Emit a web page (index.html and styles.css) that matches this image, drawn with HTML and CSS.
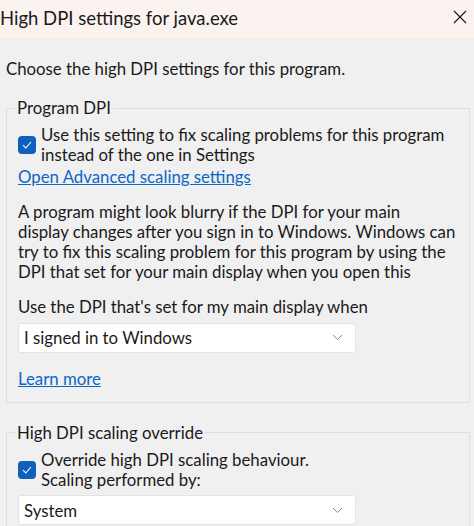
FILE: index.html
```html
<!DOCTYPE html>
<html lang="en">

<head>
    <meta charset="UTF-8">
    <meta name="viewport" content="width=device-width, initial-scale=1.0">
    <title>High DPI settings for java.exe</title>
    <link rel="stylesheet" href="styles.css">
</head>

<body>
    <div class="titlebar">
        <span class="title">High DPI settings for java.exe</span>
        <svg class="close" width="14" height="14" viewBox="0 0 14 14">
            <path d="M1 1 L13 13 M13 1 L1 13" stroke="#1a1a1a" stroke-width="1.2" fill="none" />
        </svg>
    </div>

    <div class="content">
        <p class="intro">Choose the high DPI settings for this program.</p>

        <fieldset class="group">
            <legend>Program DPI</legend>
            <label class="check">
                <span class="box">
                    <svg width="10" height="8" viewBox="0 0 10 8">
                        <path d="M1 4.2 L3.8 7 L9 1" stroke="#fff" stroke-width="1.1" fill="none" />
                    </svg>
                </span>
                <span>Use this setting to fix scaling problems for this program instead of the one in Settings</span>
            </label>
            <a href="#" class="link">Open Advanced scaling settings</a>

            <p class="desc">A program might look blurry if the DPI for your main<br>
                display changes after you sign in to Windows. Windows can<br>
                try to fix this scaling problem for this program by using the<br>
                DPI that set for your main display when you open this</p>

            <p class="label">Use the DPI that's set for my main display when</p>
            <div class="select">
                <span>I signed in to Windows</span>
                <svg width="11" height="7" viewBox="0 0 11 7">
                    <path d="M1 1 L5.5 5.5 L10 1" stroke="#888" stroke-width="1" fill="none" />
                </svg>
            </div>

            <a href="#" class="link learn">Learn more</a>
        </fieldset>

        <fieldset class="group last">
            <legend>High DPI scaling override</legend>
            <label class="check">
                <span class="box">
                    <svg width="10" height="8" viewBox="0 0 10 8">
                        <path d="M1 4.2 L3.8 7 L9 1" stroke="#fff" stroke-width="1.1" fill="none" />
                    </svg>
                </span>
                <span class="lines">
                    <span>Override high DPI scaling behaviour.</span>
                    <span>Scaling performed by:</span>
                </span>
            </label>
            <div class="select override">
                <span>System</span>
                <svg width="11" height="7" viewBox="0 0 11 7">
                    <path d="M1 1 L5.5 5.5 L10 1" stroke="#888" stroke-width="1" fill="none" />
                </svg>
            </div>
        </fieldset>
    </div>
</body>

</html>
```

FILE: styles.css
```css
body {
    margin: 0;
    height: 526px;
    background-color: #f0f0f0;
    font-family: Lato, 'Noto Sans', sans-serif;
    font-size: 16.8px;
    color: #1a1a1a;
    overflow: hidden;
}

.titlebar {
    display: flex;
    justify-content: space-between;
    align-items: center;
    height: 38px;
    padding: 0 7px 0 0;
    background-color: #fbf3ef;
}

.title {
    font-size: 18.5px;
    margin-top: -3px;
}

.close {
    margin-top: -4px;
}

.content {
    padding: 0 4px 0 6px;
}

.intro {
    margin: 20px 0 17px 0;
    line-height: 22px;
}

.group {
    margin: 0 0 19px 0;
    padding: 0 0 13px 11px;
    border: 1px solid #dedede;
    border-radius: 0;
}

.group.last {
    padding-bottom: 2px;
}

.group legend {
    margin-left: -3px;
    padding: 0 2px;
    line-height: 22px;
}

.check {
    display: flex;
    align-items: center;
    gap: 5px;
    line-height: 20.3px;
    margin-top: 6px;
}

.lines {
    display: flex;
    flex-direction: column;
}

.box {
    flex: none;
    width: 18px;
    height: 18px;
    border-radius: 4px;
    background-color: #0f5fbd;
    display: flex;
    justify-content: center;
    align-items: center;
}

.link {
    display: inline-block;
    color: #0a67c8;
    text-decoration: underline;
    line-height: 20px;
    margin-top: 0;
}

.desc {
    margin: 15px 0 0 0;
    line-height: 20.3px;
}

.label {
    margin: 14px 0 6px 0;
    line-height: 20px;
}

.select {
    width: 319px;
    height: 28px;
    background-color: #fff;
    border: 1px solid #e2e2e2;
    border-radius: 3px;
    display: flex;
    justify-content: space-between;
    align-items: center;
    padding: 0 12px 0 5px;
}

.override {
    margin-top: 5px;
}

.learn {
    margin-top: 16px;
}
```
